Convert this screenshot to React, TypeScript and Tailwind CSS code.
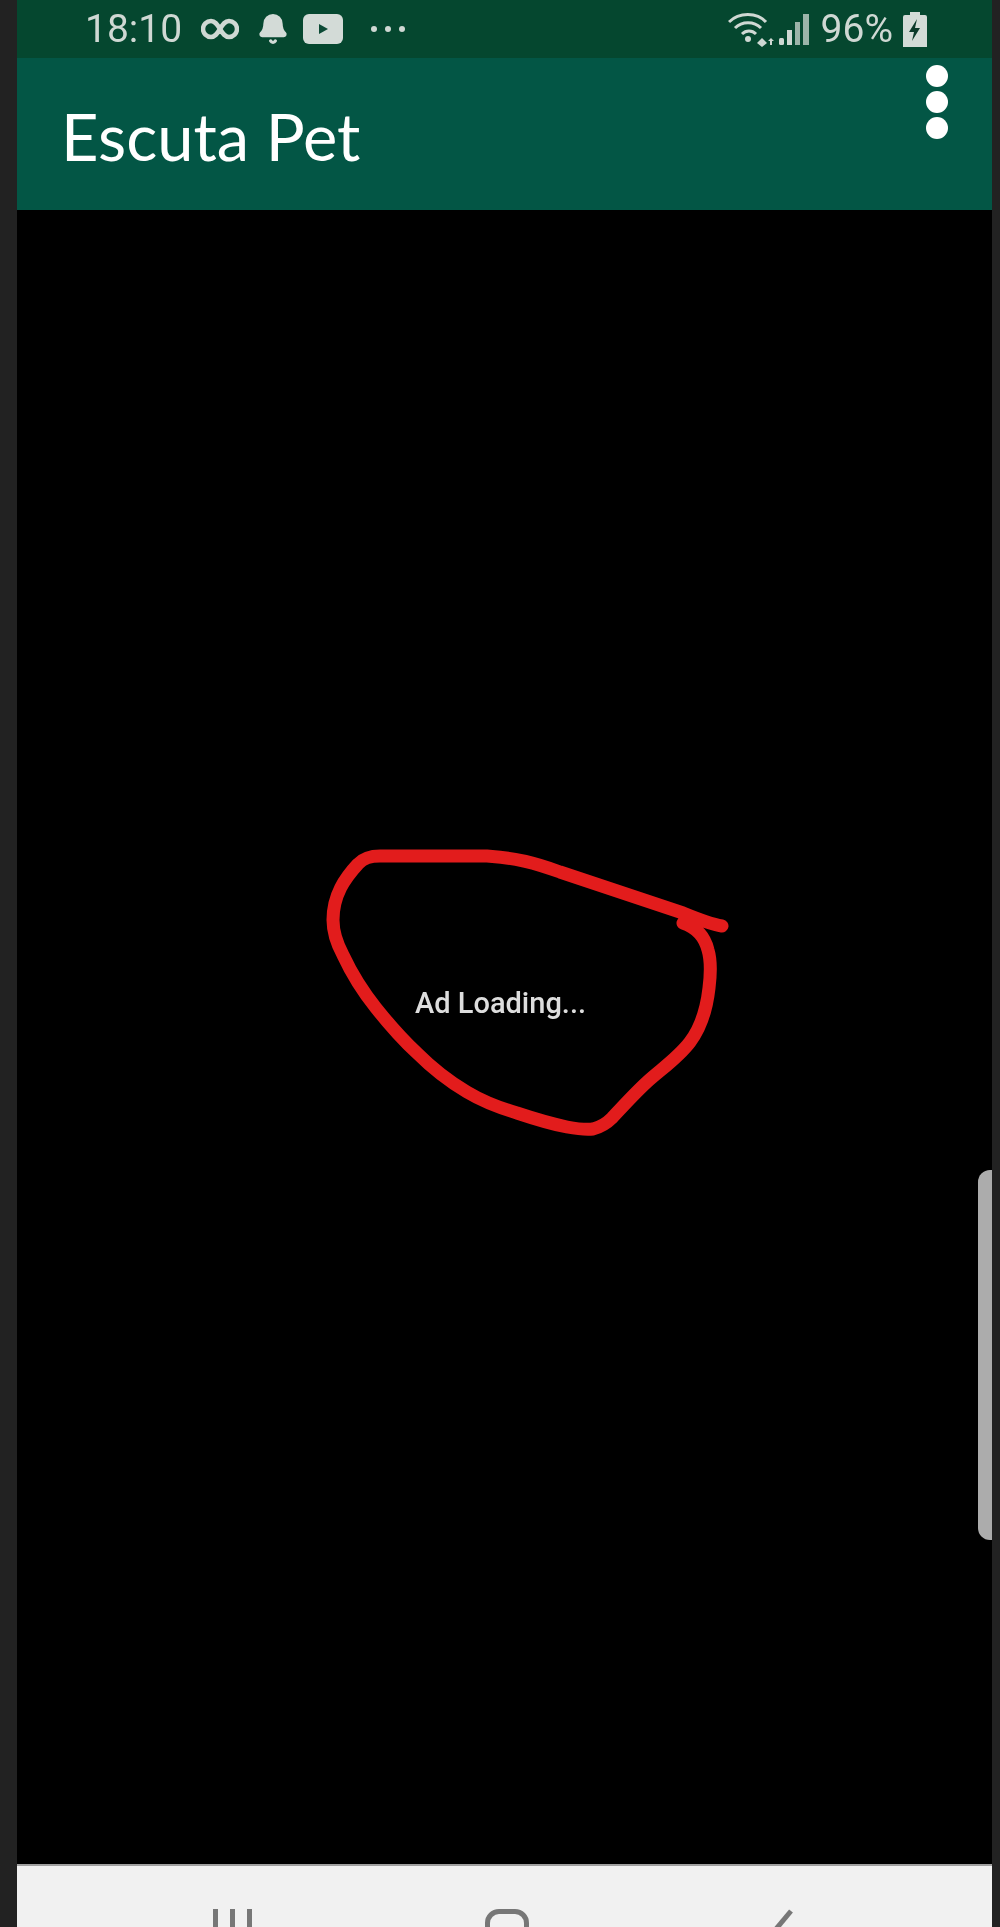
import { Bell } from 'lucide-react';

function InfinityIcon() {
  return (
    <svg width="38" height="22" viewBox="0 0 38 22" fill="none" stroke="#cfd8d3" strokeWidth="4.5">
      <path d="M19 11c-3-5-5-8-9-8a8 8 0 0 0 0 16c4 0 6-3 9-8s5-8 9-8a8 8 0 0 1 0 16c-4 0-6-3-9-8z" />
    </svg>
  );
}

function YoutubeIcon() {
  return (
    <svg width="40" height="30" viewBox="0 0 40 30">
      <rect width="40" height="30" rx="6" fill="#d3dbd7" />
      <path d="M16 10l9 5-9 5z" fill="#0b4a35" />
    </svg>
  );
}

function WifiIcon() {
  return (
    <svg width="46" height="35" viewBox="0 0 46 35" fill="none" stroke="#cfd8d3" strokeWidth="3">
      <path d="M1 10C11 0 29 0 38 10" />
      <path d="M7 16c7-7 19-7 26 0" />
      <path d="M14 22c4-4 10-4 14 0" />
      <circle cx="20" cy="27" r="3" fill="#cfd8d3" stroke="none" />
      <path d="M29 31l5-5 5 5-5 4z" fill="#cfd8d3" stroke="none" />
      <path d="M40 29l3-3 3 3h-2v4h-2v-4z" fill="#cfd8d3" stroke="none" />
    </svg>
  );
}

function SignalIcon() {
  return (
    <svg width="30" height="32" viewBox="0 0 30 32" fill="#cfd8d3">
      <rect x="0" y="25" width="5" height="7" rx="1.5" />
      <rect x="8" y="17" width="5" height="15" />
      <rect x="16" y="9" width="5" height="23" opacity="0.75" />
      <rect x="24" y="1" width="6" height="31" opacity="0.75" />
    </svg>
  );
}

function BatteryIcon() {
  return (
    <svg width="24" height="35" viewBox="0 0 24 35">
      <path d="M7 0h10v3h5a2 2 0 0 1 2 2v30H0V5a2 2 0 0 1 2-2h5z" fill="#d3dbd7" />
      <path d="M14 7L6 20h5l-2 9 8-13h-5z" fill="#0b3a2a" />
    </svg>
  );
}

function Scribble() {
  return (
    <svg className="absolute left-[300px] top-[830px] blur-[0.7px]" width="450" height="320" viewBox="300 830 450 320" fill="none">
      <path
        d="M722 926 C710 924 700 920 683 913 L560 872 C535 863 517 858 487 856 L380 856 C370 856 364 858 358 864 C345 878 333 895 333 920 C333 932 336 942 343 955 C350 970 360 988 376 1008 C392 1028 405 1042 417 1053 C432 1068 450 1082 467 1092 C482 1101 500 1108 517 1113 C535 1119 552 1124 567 1127 C578 1129 586 1130 593 1129 C601 1127 606 1124 612 1118 C625 1104 635 1093 647 1082 C660 1070 678 1058 690 1042 C702 1026 707 1006 709 988 C711 972 711 960 708 950 C705 938 698 928 683 923"
        stroke="#e21c1c"
        strokeWidth="13"
        strokeLinecap="round"
        strokeLinejoin="round"
      />
    </svg>
  );
}

export default function App() {
  return (
    <div className="relative h-[1927px] w-[1000px] overflow-hidden bg-[#222222] pl-[17px] pr-[8px]">
      <div className="flex h-full flex-col blur-[0.7px]">
        {/* Status bar */}
        <div className="flex h-[58px] shrink-0 items-center bg-[#05472f] pl-[68px] pr-[65px] text-[#cfd8d3]" style={{ fontFamily: 'Roboto, sans-serif' }}>
          <span className="text-[39px] leading-none">18:10</span>
          <span className="ml-[19px]"><InfinityIcon /></span>
          <Bell className="ml-[18px]" size={32} fill="#d3dbd7" stroke="#d3dbd7" strokeWidth={2.5} />
          <span className="ml-[14px]"><YoutubeIcon /></span>
          <div className="ml-[28px] flex gap-[8px]">
            <span className="h-[6px] w-[6px] rounded-full bg-[#cfd8d3]" />
            <span className="h-[6px] w-[6px] rounded-full bg-[#cfd8d3]" />
            <span className="h-[6px] w-[6px] rounded-full bg-[#cfd8d3]" />
          </div>
          <div className="ml-auto flex items-center">
            <WifiIcon />
            <span className="ml-[5px]"><SignalIcon /></span>
            <span className="ml-[12px] text-[39px] leading-none">96%</span>
            <span className="ml-[10px]"><BatteryIcon /></span>
          </div>
        </div>

        {/* App bar */}
        <div className="flex h-[152px] shrink-0 items-start justify-between bg-[#035645] pl-[44px] pr-[44px]">
          <span className="mt-[46px] text-[65px] leading-none text-white" style={{ fontFamily: 'Lato, sans-serif' }}>Escuta Pet</span>
          <div className="mt-[7px] flex flex-col gap-[4px]">
            <span className="h-[22px] w-[22px] rounded-full bg-white" />
            <span className="h-[22px] w-[22px] rounded-full bg-white" />
            <span className="h-[22px] w-[22px] rounded-full bg-white" />
          </div>
        </div>

        {/* Ad area */}
        <div className="relative flex-1 bg-black pr-[8px] pt-[776px] text-center">
          <span className="text-[29px] font-medium leading-[34px] text-[#dddddd]" style={{ fontFamily: 'Roboto, sans-serif' }}>Ad Loading...</span>
          <div className="absolute right-0 top-[960px] h-[370px] w-[14px] rounded-l-[12px] bg-[#acacac]" />
        </div>

        {/* Nav bar */}
        <div className="flex h-[63px] shrink-0 overflow-hidden border-t-2 border-[#a0a0a0] bg-[#f1f1f1] pl-[196px] pt-[43px]">
          <div className="flex gap-[12px]">
            <span className="h-[40px] w-[5px] bg-[#777777]" />
            <span className="h-[40px] w-[5px] bg-[#777777]" />
            <span className="h-[40px] w-[5px] bg-[#777777]" />
          </div>
          <span className="ml-[233px] h-[50px] w-[44px] rounded-[14px] border-[5px] border-[#777777]" />
          <svg className="ml-[240px]" width="24" height="40" viewBox="0 0 24 40" fill="none" stroke="#777777" strokeWidth="5">
            <path d="M22 2L2 26" />
          </svg>
        </div>
      </div>
      <Scribble />
    </div>
  );
}
